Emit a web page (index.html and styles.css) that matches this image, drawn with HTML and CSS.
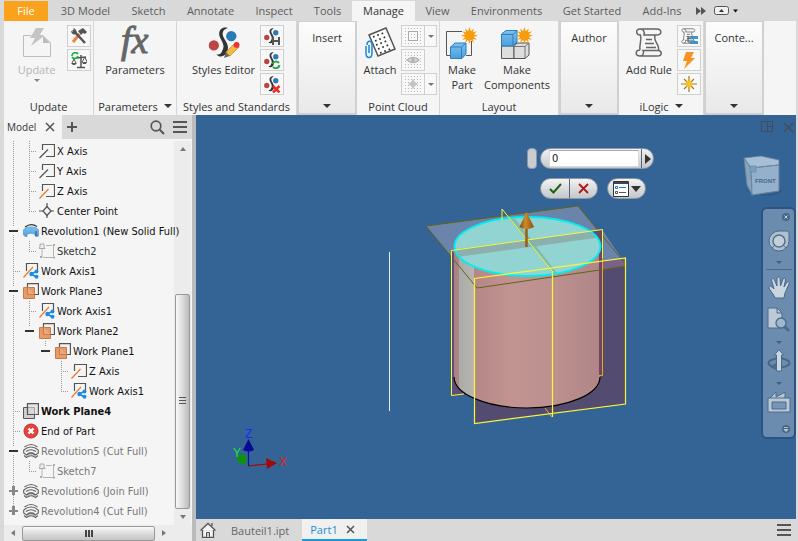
FILE: index.html
```html
<!DOCTYPE html>
<html lang="en">
<head>
  <meta charset="UTF-8">
  <meta name="viewport" content="width=device-width, initial-scale=1.0">
  <title>Part1</title>
  <link rel="stylesheet" href="styles.css">
</head>
<body>

<!-- shared icons -->
<svg class="defs" aria-hidden="true">
  <defs>
    <linearGradient id="blueFace" x1="0" y1="0" x2="0" y2="1">
      <stop offset="0" stop-color="#7cc2f2"/><stop offset="1" stop-color="#4a9fdc"/>
    </linearGradient>
    <symbol id="i-axis" viewBox="0 0 16 16">
      <path d="M3.5 7V1.500H15.500V13.500H7" fill="none" stroke="#555" stroke-width="1.200"/>
      <path d="M.5 15L9 6.500" stroke="#555" stroke-width="1.200"/>
    </symbol>
    <symbol id="i-zaxis" viewBox="0 0 16 16">
      <path d="M3.5 8V1.500H15.500V13.500H7" fill="none" stroke="#555" stroke-width="1.200"/>
      <path d="M.5 15.500L9.500 6" stroke="#ee7b30" stroke-width="1.300"/>
    </symbol>
    <symbol id="i-waxis" viewBox="0 0 16 16">
      <path d="M3.500 8V.500H14.500V7" fill="none" stroke="#555" stroke-width="1.200"/>
      <path d="M.5 14.500L10 4" stroke="#ee7b30" stroke-width="1.300"/>
      <path d="M13.500 8.500L8 11L13.500 14" fill="none" stroke="#1b8ce6" stroke-width="1.600"/>
      <g fill="#1b8ce6"><circle cx="13.500" cy="8.500" r="2"/><circle cx="8.500" cy="11" r="2.200"/><circle cx="13.500" cy="13.800" r="2"/></g>
    </symbol>
    <symbol id="i-point" viewBox="0 0 16 16">
      <path d="M8 3.500L12 8L8 12.500L4 8Z" fill="none" stroke="#555" stroke-width="1.300"/>
      <path d="M8 0V4M8 12V15M0 8H4M12 8H15" stroke="#555" stroke-width="1.200"/>
    </symbol>
    <symbol id="i-rev" viewBox="0 0 16 16">
      <path d="M2 4Q8-.5 14 3.500" fill="none" stroke="#333" stroke-width="1.200"/>
      <path d="M.5 7Q2 4 8 4Q14 4 15.500 7V13Q14 14 12 13V11Q8 9.500 4 11V13.500Q2 14 .5 12Z" fill="url(#blueFace)" stroke="#3c88c0" stroke-width=".6"/>
      <path d="M13 8V13" stroke="#31546e"/>
    </symbol>
    <symbol id="i-revcut" viewBox="0 0 16 16">
      <path d="M4 10Q8 8 12 10V14Q8 12 4 14Z" fill="#c8c8c8"/>
      <path d="M1.500 4Q8-1 14.500 4M.7 7Q8 1 15.300 7M.7 7V10L3.500 12Q8 8 12.500 12L15.300 10V7M3 8.500Q8 5 13 8.500M3.500 14.500Q8 11 12.500 14.500L15 12.500M1 12.500L3.500 14.500" fill="none" stroke="#666" stroke-width="1.200"/>
    </symbol>
    <symbol id="i-sketch" viewBox="0 0 16 16">
      <path d="M3 6V14M4 14.500H14M14.500 3V13M7 2.500H13" fill="none" stroke="#b4b4b4"/>
      <path d="M1 1H5V4L6 5.500H0L1 4Z" fill="#eee" stroke="#aaa"/>
      <path d="M1 13H3V15H1ZM14 1H16V3H14ZM14 13.500H16V15.500H14Z" fill="#aaa"/>
    </symbol>
    <symbol id="i-plane" viewBox="0 0 16 16">
      <path d="M4.500 4V.700H15.400V11.500H12" fill="none" stroke="#555" stroke-width="1.200"/>
      <path d="M.5 4.500H11.500V15.500H.5Z" fill="#e79b66" stroke="#c87a48"/>
      <path d="M4.500 4.500V11.500H11.500" fill="#e8ac84" stroke="#c87a48"/>
    </symbol>
    <symbol id="i-planegray" viewBox="0 0 16 16">
      <path d="M.5 4.500H11.500V15.500H.5Z" fill="#cfcfcf" stroke="#555"/>
      <path d="M4.500 .700H15.400V11.500H4.500Z" fill="#dcdcdc" fill-opacity=".6" stroke="#555" stroke-width="1.200"/>
    </symbol>
    <symbol id="i-end" viewBox="0 0 16 16">
      <circle cx="8" cy="8" r="7" fill="#e8423a" stroke="#b9332d"/>
      <path d="M5.500 5.500L10.500 10.500M10.500 5.500L5.500 10.500" stroke="#fff" stroke-width="2.400"/>
    </symbol>
    <symbol id="i-styles" viewBox="0 0 32 32">
      <path d="M20 1C13-1 9 5 12 11C15 17 17 19 14 25C13 28 10 29 8 28C13 34 21 28 20 20C19 14 13 10 15 5C16 2 18 2 20 1Z" fill="#333"/>
      <circle cx="5.500" cy="19" r="5.300" fill="#bc4646"/><circle cx="23.500" cy="9.500" r="5.300" fill="#2a7ab8"/>
    </symbol>
    <symbol id="i-burst" viewBox="0 0 16 16">
      <path d="M8 0L9.300 4L12 1.500L11.300 5L15 4L12 7L16 8L12 9.300L15 12L11.300 11.300L12 15L9.300 12L8 16L6.700 12L4 15L4.700 11.300L1 12L4 9.300L0 8L4 7L1 4L4.700 5L4 1.500L6.700 4Z" fill="#f59d0c"/>
    </symbol>
    <symbol id="i-scroll" viewBox="0 0 28 30">
      <path d="M5 1.500H22C27 1.500 27 7.500 22.500 7.500H9C10 4 8 1.500 5 1.500C0 1.500 1 7.500 5 7.500H6M5.500 7.500C7 13 4 17 5 22.500M20 8C18 14 25 17 23.500 23M5 22.500C0 22.500 0 28.500 5 28.500H22C28 28.500 27 23 23 23H8C9.500 25 8 28.500 5 28.500M11 12H17M10 16H19M11 20H21" fill="none" stroke="#666" stroke-width="1.500"/>
    </symbol>
    <symbol id="i-dots" viewBox="0 0 16 16">
      <path d="M0 .5H16M0 3.500H16M0 6.500H16M0 9.500H16M0 12.500H16M0 15.500H16" stroke="#b9b9b9" stroke-dasharray="1 2"/>
    </symbol>
  </defs>
</svg>

<div class="app">

  <nav class="tabs">
    <button class="tab file">File</button>
    <button class="tab">3D Model</button>
    <button class="tab">Sketch</button>
    <button class="tab">Annotate</button>
    <button class="tab">Inspect</button>
    <button class="tab">Tools</button>
    <button class="tab active">Manage</button>
    <button class="tab">View</button>
    <button class="tab">Environments</button>
    <button class="tab">Get Started</button>
    <button class="tab">Add-Ins</button>
    <span class="tab-tools">
      <button class="bare" aria-label="More tabs"><svg width="10" height="8" viewBox="0 0 10 8"><path d="M0 0L5 4L0 8ZM5 0L10 4L5 8Z" fill="#555"/></svg></button>
      <button class="bare" aria-label="Minimize ribbon"><svg width="24" height="10" viewBox="0 0 24 10"><rect x=".5" y=".5" width="14" height="8" rx="2" fill="#eef1f4" stroke="#555"/><path d="M5 6L7.500 3L10 6Z" fill="#333"/><path d="M19 3.500H24L21.500 6.500Z" fill="#111"/></svg></button>
    </span>
  </nav>

  <div class="ribbon">
    <section class="panel">
      <div class="panel-body">
        <button class="big disabled">
          <svg width="32" height="32" viewBox="0 0 32 32"><path d="M3 8.500H10M14 8.500H22L29.500 16V29.500H2.500V8.500H5" fill="none" stroke="#bdbdbd"/><path d="M22 9V16H29Z" fill="#bbb"/><path d="M15 1H23L18 9H23L10 19L14 11H9Z" fill="#c4c4c4"/></svg>
          <span>Update</span><i class="down"></i>
        </button>
        <div class="smalls">
          <button class="small" aria-label="Rebuild"><svg width="16" height="16" viewBox="0 0 16 16"><path d="M8.500 6L2 14" stroke="#ef8240" stroke-width="3"/><path d="M2 2L14 15" stroke="#555" stroke-width="2.500"/><path d="M0 3C0 6 4 8 6 5C6 3 4 0 2 0L4 3L3 4Z" fill="#555"/><path d="M7 3L12 0L16 4L14 6L12 5L10 7Z" fill="#555"/></svg></button>
          <button class="small" aria-label="Update mass"><svg width="16" height="17" viewBox="0 0 16 17"><path d="M10 3V15M6 15.500H14M5 6L15 5" stroke="#555" stroke-width="1.500"/><path d="M1 11L3 7L5 11M11 10L14 5L16 10" fill="none" stroke="#555"/><path d="M0 11H6L4 13H2ZM11 10H16L15 12H12Z" fill="#555"/><path d="M1 4A3.300 3.300 0 0 1 7 2M7 4A3.300 3.300 0 0 1 1 5" fill="none" stroke="#18b048" stroke-width="1.700"/></svg></button>
        </div>
      </div>
      <h2>Update</h2>
    </section>

    <section class="panel">
      <div class="panel-body">
        <button class="big">
          <svg class="fx-icon" width="36" height="32" viewBox="0 0 36 32"><text class="fx" x="4" y="26">fx</text></svg>
          <span>Parameters</span>
        </button>
      </div>
      <h2>Parameters <i class="down"></i></h2>
    </section>

    <section class="panel">
      <div class="panel-body styles">
        <button class="big">
          <svg width="32" height="32" viewBox="0 0 32 33"><use href="#i-styles" width="32" height="32"/><path d="M18 26L27 17L31 21L22 30Z" fill="#f3ba44" stroke="#b98824" stroke-width=".8"/><path d="M18 26L22 30L16 32Z" fill="#666"/><circle cx="29" cy="18.500" r="3" fill="#e33"/></svg>
          <span>Styles Editor</span>
        </button>
        <div class="smalls">
          <button class="small" aria-label="Save styles"><svg width="17" height="17" viewBox="0 0 17 17"><use href="#i-styles" width="16" height="16"/><path d="M8 9H16V17H8Z" fill="#555"/><path d="M10 9H14V12H10ZM10 14H14V17H10Z" fill="#eee"/></svg></button>
          <button class="small" aria-label="Update styles"><svg width="17" height="17" viewBox="0 0 17 17"><use href="#i-styles" width="16" height="16"/><path d="M8.500 12A3.800 3.800 0 0 1 15 11M15.500 13A3.800 3.800 0 0 1 9 15" fill="none" stroke="#28a84a" stroke-width="2"/></svg></button>
          <button class="small" aria-label="Purge styles"><svg width="17" height="17" viewBox="0 0 17 17"><use href="#i-styles" width="16" height="16"/><path d="M9 10L15.500 16.500M15.500 10L9 16.500" stroke="#ec2c2c" stroke-width="2.500"/></svg></button>
        </div>
      </div>
      <h2>Styles and Standards</h2>
    </section>

    <button class="panel folded"><span>Insert</span><i class="down"></i></button>

    <section class="panel">
      <div class="panel-body">
        <button class="big">
          <svg width="32" height="32" viewBox="0 0 32 32"><path d="M5 8L22 1L31 22L14 29Z" fill="#fff" stroke="#555" stroke-width="1.500"/><g fill="none" stroke="#333" stroke-width="1.700" stroke-dasharray="1.700 2.900"><path d="M9 10L22 5"/><path d="M11 14L24 9"/><path d="M12 18L25 13"/><path d="M14 22L27 17"/><path d="M16 26L29 21"/></g><path d="M2 19V26C2 32 8 32 8 26V18C8 13 3 13 3 18M5 18V26" fill="none" stroke="#1787d8" stroke-width="1.500"/></svg>
          <span>Attach</span>
        </button>
        <div class="smalls">
          <span class="split"><button class="small" aria-label="Box crop"><svg width="16" height="16" viewBox="0 0 16 16"><use href="#i-dots" width="16" height="16"/><path d="M3.500 3.500H12.500V12.500H3.500Z" fill="none" stroke="#aaa"/></svg></button><button class="drop" aria-label="Crop options"><i class="down"></i></button></span>
          <button class="small" aria-label="Cloud visibility"><svg width="16" height="16" viewBox="0 0 16 16"><use href="#i-dots" width="16" height="16"/><path d="M2 8Q8 3 14 8Q8 13 2 8Z" fill="#ddd" stroke="#b4b4b4" stroke-width="1.500"/><circle cx="8" cy="8" r="2" fill="#b4b4b4"/></svg></button>
          <span class="split"><button class="small" aria-label="Cloud point"><svg width="16" height="16" viewBox="0 0 16 16"><use href="#i-dots" width="16" height="16"/><path d="M8 3L10 6L13 8L10 10L8 13L6 10L3 8L6 6Z" fill="#c4c4c4"/></svg></button><button class="drop" aria-label="Point options"><i class="down"></i></button></span>
        </div>
      </div>
      <h2>Point Cloud</h2>
    </section>

    <section class="panel">
      <div class="panel-body layout">
        <button class="big part">
          <svg width="32" height="32" viewBox="0 0 32 32"><path d="M4 28.500H.500V4.500H16M25.500 14V28.500H20" fill="none" stroke="#555"/><path d="M4.500 20L9 16H20V27L16 31.500H4.500Z" fill="url(#blueFace)" stroke="#2f7eb8"/><path d="M4.500 20H15.500V31M15.500 20L20 16" fill="none" stroke="#2f7eb8"/><use href="#i-burst" x="15" y="0" width="17" height="17"/></svg>
          <span>Make<br>Part</span>
        </button>
        <button class="big">
          <svg width="32" height="32" viewBox="0 0 32 32"><path d="M.5 19H13V31.500H.5Z" fill="#ddd" stroke="#555"/><path d="M13 19.500L16 16H28V28L24 31.500H13Z" fill="#ddd" stroke="#555"/><path d="M13 19.500H24V31M24 19.500L28 16" fill="none" stroke="#777"/><path d="M.5 7L5 3.500H16V15L12 19H.5Z" fill="url(#blueFace)" stroke="#2f7eb8"/><path d="M.5 7.500H12V19M12 7.500L16 3.500" fill="none" stroke="#2f7eb8"/><use href="#i-burst" x="15" y="0" width="17" height="17"/></svg>
          <span>Make<br>Components</span>
        </button>
      </div>
      <h2>Layout</h2>
    </section>

    <button class="panel folded"><span>Author</span><i class="down"></i></button>

    <section class="panel">
      <div class="panel-body">
        <button class="big">
          <svg width="28" height="32" viewBox="0 0 28 32"><use href="#i-scroll" width="28" height="31"/></svg>
          <span>Add Rule</span>
        </button>
        <div class="smalls">
          <button class="small" aria-label="iLogic browser"><svg width="17" height="17" viewBox="0 0 17 17"><use href="#i-scroll" width="15" height="16"/><path d="M7 8V14H10M7 10H10" fill="none" stroke="#555"/><path d="M9 8H17V11H9ZM9 13H17V16H9Z" fill="#3d94d0"/></svg></button>
          <button class="small" aria-label="Event triggers"><svg width="16" height="17" viewBox="0 0 16 17"><path d="M5 0H13L10 6H14L3 17L6 9H2Z" fill="#f7931e"/></svg></button>
          <button class="small" aria-label="iTrigger"><svg width="16" height="16" viewBox="0 0 16 16"><path d="M8 0V16M0 8H16M3 3L13 13M13 3L3 13" stroke="#a8791c" stroke-width="1.200"/><circle cx="8" cy="8" r="3.300" fill="#fbc21c"/></svg></button>
        </div>
      </div>
      <h2>iLogic <i class="down"></i></h2>
    </section>

    <button class="panel folded"><span>Conte...</span><i class="down"></i></button>
  </div>

  <div class="work">
    <aside class="browser">
      <header class="browser-head">
        <span class="browser-tab">Model
          <button class="bare" aria-label="Close"><svg width="10" height="10" viewBox="0 0 10 10"><path d="M1 1L9 9M9 1L1 9" stroke="#555" stroke-width="1.500"/></svg></button>
        </span>
        <button class="bare" aria-label="Add"><svg width="12" height="12" viewBox="0 0 12 12"><path d="M6 1V11M1 6H11" stroke="#555" stroke-width="2"/></svg></button>
        <button class="bare search" aria-label="Search"><svg width="15" height="15" viewBox="0 0 15 15"><circle cx="6" cy="6" r="4.800" fill="none" stroke="#555" stroke-width="1.700"/><path d="M9.500 9.500L14 14" stroke="#555" stroke-width="2"/></svg></button>
        <button class="bare" aria-label="Menu"><svg width="14" height="12" viewBox="0 0 14 12"><path d="M0 1H14M0 6H14M0 11H14" stroke="#555" stroke-width="2"/></svg></button>
      </header>

      <div class="browser-body">
        <ul class="tree">
          <li><i class="v"></i><i class="v t"></i><svg><use href="#i-axis"/></svg>X Axis</li>
          <li><i class="v"></i><i class="v t"></i><svg><use href="#i-axis"/></svg>Y Axis</li>
          <li><i class="v"></i><i class="v t"></i><svg><use href="#i-zaxis"/></svg>Z Axis</li>
          <li><i class="v"></i><i class="l t"></i><svg><use href="#i-point"/></svg>Center Point</li>
          <li><i class="v minus"></i><svg><use href="#i-rev"/></svg>Revolution1 (New Solid Full)</li>
          <li><i class="v"></i><i class="l t"></i><svg><use href="#i-sketch"/></svg><span class="dark">Sketch2</span></li>
          <li><i class="v t"></i><svg><use href="#i-waxis"/></svg>Work Axis1</li>
          <li><i class="v minus"></i><svg><use href="#i-plane"/></svg>Work Plane3</li>
          <li><i class="v"></i><i class="v t"></i><svg><use href="#i-waxis"/></svg>Work Axis1</li>
          <li><i class="v"></i><i class="l minus"></i><svg><use href="#i-plane"/></svg>Work Plane2</li>
          <li><i class="v"></i><i></i><i class="l minus"></i><svg><use href="#i-plane"/></svg>Work Plane1</li>
          <li><i class="v"></i><i></i><i></i><i class="v t"></i><svg><use href="#i-zaxis"/></svg>Z Axis</li>
          <li><i class="v"></i><i></i><i></i><i class="l t"></i><svg><use href="#i-waxis"/></svg>Work Axis1</li>
          <li class="current"><i class="v t"></i><svg><use href="#i-planegray"/></svg>Work Plane4</li>
          <li><i class="v t"></i><svg><use href="#i-end"/></svg>End of Part</li>
          <li class="dim"><i class="v minus"></i><svg><use href="#i-revcut"/></svg>Revolution5 (Cut Full)</li>
          <li class="dim"><i class="v"></i><i class="l t"></i><svg><use href="#i-sketch"/></svg>Sketch7</li>
          <li class="dim"><i class="v minus plus"></i><svg><use href="#i-revcut"/></svg>Revolution6 (Join Full)</li>
          <li class="dim"><i class="l minus plus"></i><svg><use href="#i-revcut"/></svg>Revolution4 (Cut Full)</li>
        </ul>
        <div class="vscroll">
          <i class="arrow up"></i><div class="track"><div class="thumb"></div></div><i class="arrow"></i>
        </div>
      </div>
      <div class="hscroll">
        <i class="arrow left"></i><div class="thumb"></div><i class="arrow right"></i>
      </div>
    </aside>

    <main class="stage">
      <div class="viewport">
        <svg class="scene" viewBox="196 115 600 404" preserveAspectRatio="xMidYMid meet">
          <defs>
            <linearGradient id="body" x1="454" x2="600" y1="0" y2="0" gradientUnits="userSpaceOnUse">
              <stop offset="0" stop-color="#a97f84"/><stop offset=".035" stop-color="#b08788"/>
              <stop offset=".035" stop-color="#a9abaa"/><stop offset=".14" stop-color="#b8b5b0"/>
              <stop offset=".14" stop-color="#b58887"/><stop offset=".4" stop-color="#c19492"/>
              <stop offset=".7" stop-color="#bc908e"/><stop offset="1" stop-color="#af8587"/>
            </linearGradient>
            <linearGradient id="cone"><stop offset="0" stop-color="#7c4608"/><stop offset=".4" stop-color="#d08a26"/><stop offset="1" stop-color="#8a500c"/></linearGradient>
            <clipPath id="topClip"><ellipse cx="527.500" cy="246.500" rx="73" ry="29.500"/></clipPath>
          </defs>
          <path d="M389.500 252V411" stroke="#e6edf4"/>
          <path d="M426 226L578 206L627 266L477 288Z" fill="#6b84ac"/>
          <path d="M452 250L602 230V376L452 396Z" fill="#5f4e73"/>
          <path d="M452 250L474 288V278L454 250Z" fill="#6b84ac"/>
          <path d="M474.500 278.500L625.500 258V404L474.500 423.500Z" fill="#544c70"/>
          <path d="M602 231V262L625 258L627 266L602 270Z" fill="#79628a"/>
          <path d="M603 231V261L622 259Z" fill="#6b84ac"/>
          <path d="M454 247V377A73 31 0 0 0 600 377V247Z" fill="url(#body)"/>
          <path d="M599 232L603 230V376H599Z" fill="#72445f"/>
          <path d="M454 377A73 31 0 0 0 600 377" fill="none" stroke="#000" stroke-width="1.200"/>
          <ellipse cx="527.500" cy="246.500" rx="73" ry="29.500" fill="#92d4d2"/>
          <g clip-path="url(#topClip)">
            <path d="M450 250L602 230V237L450 258Z" fill="#8cb0ae"/>
            <path d="M501 209L514 217L560 277L552 272Z" fill="#7fb7a7" fill-opacity=".8"/>
          </g>
          <ellipse cx="527.500" cy="246.500" rx="73" ry="29.500" fill="none" stroke="#00eef0" stroke-width="2"/>
          <path d="M426 226L578 206L627 266L477 288Z" fill="none" stroke="#626414"/>
          <path d="M602.500 258V375.500H599M545 408L552 417" fill="none" stroke="#e9a820"/>
          <path d="M602.500 258V229.500L451.500 250.500V395.500L464 394M502 220V209L552 271" fill="none" stroke="#f7f73a"/>
          <path d="M474.500 278.500L625.500 258V404L474.500 423.500ZM552.500 271V417" fill="none" stroke="#f7f73a" stroke-width="1.200"/>
          <path d="M526.500 227V247" stroke="#9a5e14" stroke-width="2.500"/>
          <path d="M526.500 212L534 227Q526.500 231 519.500 227Z" fill="url(#cone)"/>

          <path d="M248.500 466L267 464" stroke="#b40000" stroke-width="1.200"/>
          <path d="M248.500 466V448" stroke="#0d0db0" stroke-width="1.200"/>
          <path d="M248 466L243 460" stroke="#13941c"/>
          <path d="M266 458L277 463L267 469Z" fill="#a00a0a"/>
          <path d="M248.500 439L254 450Q248.500 453 243 450Z" fill="#0a0a96"/>
          <circle cx="242" cy="459" r="5" fill="#109010"/>
          <text class="axis" x="279" y="466" fill="#e02020">X</text>
          <text class="axis" x="233" y="457" fill="#20e040">Y</text>
          <text class="axis" x="245" y="438" fill="#2424ff">Z</text>
        </svg>

        <div class="window-tools">
          <button class="bare" aria-label="Tile windows"><svg width="13" height="12" viewBox="0 0 13 12"><path d="M.5 .5H11.500V10.500H.5ZM6.500 .5V10.500M6.500 5.500H11.500" fill="none" stroke="#444c56"/></svg></button>
          <button class="bare" aria-label="Close window"><svg width="11" height="11" viewBox="0 0 11 11"><path d="M1 1L10 10M10 1L1 10" stroke="#444c56" stroke-width="1.400"/></svg></button>
        </div>

        <form class="mini">
          <span class="grip"></span>
          <div class="mini-rows">
            <div class="pill value">
              <input type="text" value="0" aria-label="Offset">
              <button type="button" aria-label="Value options"><svg width="6" height="10" viewBox="0 0 6 10"><path d="M0 0L6 5L0 10Z" fill="#333"/></svg></button>
            </div>
            <div class="mini-row">
              <div class="pill decide">
                <button type="button" aria-label="OK"><svg width="13" height="11" viewBox="0 0 13 11"><path d="M1 6L4.500 9.500L12 1" fill="none" stroke="#156318" stroke-width="2"/></svg></button>
                <button type="button" aria-label="Cancel"><svg width="11" height="11" viewBox="0 0 11 11"><path d="M1 1L10 10M10 1L1 10" stroke="#b01818" stroke-width="1.800"/></svg></button>
              </div>
              <button type="button" class="pill options" aria-label="Options"><svg width="28" height="16" viewBox="0 0 28 16"><path d="M.5 .5H15.500V15.500H.5Z" fill="#fff" stroke="#333"/><path d="M1 1H15V3H1Z" fill="#39465a"/><path d="M2.500 5.500H4.500V7.500H2.500ZM6 6.500H13" fill="none" stroke="#1a78d8"/><path d="M2.500 10.500H4.500V12.500H2.500ZM6 11.500H13" fill="none" stroke="#555"/><path d="M18 5H28L23 11Z" fill="#333"/></svg></button>
            </div>
          </div>
        </form>

        <svg class="cube" width="44" height="48" viewBox="740 152 44 48">
          <ellipse cx="765" cy="191" rx="17" ry="5" fill="#2c5685" fill-opacity=".6"/>
          <g stroke="#6d8299" stroke-width=".8">
            <path d="M744 158L761 156L779 160V165L751 168Z" fill="#a6bfd6"/>
            <path d="M744 158L751 168L752 195L747 185Z" fill="#86a3c0"/>
            <path d="M751 168L779 165V191L752 195Z" fill="#93b0cd"/>
            <path d="M751 168L779 165V191L752 195Z" fill="none" stroke-dasharray="5 3"/>
          </g>
          <rect x="750" y="166" width="6" height="6" fill="#7d9fc0" stroke="#5c88b0" stroke-width=".7"/>
          <text class="face" x="755" y="183">FRONT</text>
        </svg>

        <div class="navbar">
          <button class="dot" aria-label="Close navigation bar"><svg width="8" height="8" viewBox="0 0 8 8"><circle cx="4" cy="4" r="4" fill="#46668a"/><path d="M2.500 2.500L5.500 5.500M5.500 2.500L2.500 5.500" stroke="#c3d0dc"/></svg></button>
          <button class="bare" aria-label="Steering wheel"><svg width="22" height="22" viewBox="0 0 22 22"><path d="M11 1H19Q21 1 21 3V11A10 10 0 1 1 11 1Z" fill="#afc0d0" stroke="#4b6b8d"/><circle cx="11" cy="11" r="6" fill="#c3d0dc" stroke="#54718e" stroke-width="1.500"/><path d="M4 18L7 15M18 18L15 15" stroke="#54718e"/></svg></button>
          <i class="down"></i>
          <hr>
          <button class="bare" aria-label="Pan"><svg width="22" height="24" viewBox="0 0 22 24"><path d="M7 22C6 18 1 14 .8 11C2 9 4 11 6 13L3.500 4C4 2 6 2 6.500 4L9 10L9 2C10 .5 12 .5 12 2L12.500 10L15 3C16 1.500 18 2 17.500 4L16 11L19 6C20 5 22 6 21 8L17 17L16 22Z" fill="#c9d5df" stroke="#48688a"/></svg></button>
          <button class="bare zoom" aria-label="Zoom"><svg width="23" height="25" viewBox="0 0 23 25"><path d="M1 1H10L15 6V21H1Z" fill="#bccad7" stroke="#4b6b8d"/><path d="M10 1V6H15" fill="none" stroke="#4b6b8d"/><path d="M17 19L22 24" stroke="#4b6b8d" stroke-width="3"/><circle cx="14" cy="16" r="5" fill="#9fb6cb" stroke="#4b6b8d" stroke-width="1.300"/></svg></button>
          <i class="down"></i>
          <button class="bare" aria-label="Orbit"><svg width="24" height="24" viewBox="0 0 24 24"><ellipse cx="12" cy="14" rx="10.500" ry="4.500" fill="none" stroke="#486788" stroke-width="2"/><path d="M9.500 22V6H7.500L12 .700L16.500 6H14.500V22Z" fill="#c9d5df" stroke="#4b6b8d"/><path d="M3 18L9 14V21Z" fill="#4b6b8d"/></svg></button>
          <i class="down"></i>
          <button class="bare" aria-label="Look at"><svg width="24" height="23" viewBox="0 0 24 23"><path d="M3 8L9 2V7L18 2V8" fill="#b5c5d3" stroke="#4b6b8d"/><path d="M1 8H23V22H1Z" fill="#b9c8d6" stroke="#4b6b8d"/><path d="M5 12H19V19H5Z" fill="#7896b4" stroke="#4b6b8d"/></svg></button>
          <button class="dot last" aria-label="Customize"><svg width="8" height="8" viewBox="0 0 8 8"><circle cx="4" cy="4" r="4" fill="#46668a"/><path d="M2 2.500H6M2 4.500H6L4 6.500Z" fill="#c3d0dc" stroke="#c3d0dc" stroke-width=".8"/></svg></button>
        </div>
      </div>

      <footer class="docs">
        <button class="bare home" aria-label="Home"><svg width="16" height="16" viewBox="0 0 16 16"><path d="M2.500 8V15.500H13.500V8M.5 8.500L8 1.500L15.500 8.500M12 1V4" fill="#f4f4f4" stroke="#555" stroke-width="1.300"/><path d="M6.500 15V10.500H9.500V15" fill="#ccc" stroke="#555"/></svg></button>
        <a href="#" class="doc">Bauteil1.ipt</a>
        <span class="doc-open"><a href="#" class="doc">Part1</a>
          <button class="bare" aria-label="Close Part1"><svg width="9" height="9" viewBox="0 0 9 9"><path d="M1 1L8 8M8 1L1 8" stroke="#555" stroke-width="1.500"/></svg></button>
        </span>
        <button class="bare docs-menu" aria-label="Document list"><svg width="14" height="12" viewBox="0 0 14 12"><path d="M0 1H14M0 6H14M0 11H14" stroke="#555" stroke-width="2"/></svg></button>
      </footer>
    </main>
  </div>
</div>
</body>
</html>
```
FILE: styles.css
```css
* {
  box-sizing: border-box;
}
body {
  margin: 0;
  background: #d9d9d9;
  font-family: "Open Sans", "Noto Sans", sans-serif;
  font-size: 11px;
  color: #333;
}
button {
  margin: 0;
  padding: 0;
  border: 0;
  background: none;
  font: inherit;
  color: inherit;
}
svg {
  display: block;
  flex: none;
}
.defs {
  position: absolute;
  width: 0;
  height: 0;
}
.app {
  display: flex;
  flex-direction: column;
  height: 100vh;
  padding: 0 2px 0 4px;
}
.bare {
  display: flex;
  align-items: center;
}
.down {
  display: inline-block;
  border: 4px solid transparent;
  border-top-color: #333;
  border-bottom: 0;
}

/* ribbon tabs */
.tabs {
  display: grid;
  grid-template-columns: 46px 71px 55px 69px 58px 49px 63px 45px 93px 78px 62px 1fr;
  height: 21px;
  padding-top: 1px;
}
.tab {
  line-height: 20px;
  color: #5c5c5c;
  white-space: nowrap;
}
.tab.file {
  background: #faa21b;
  color: #fff;
  margin-right: 2px;
}
.tab.active {
  background: #f5f5f5;
  color: #333;
}
.tab-tools {
  display: flex;
  align-items: center;
  gap: 8px;
  padding-left: 3px;
}

/* ribbon panels */
.ribbon {
  display: grid;
  grid-template-columns: 90px 83px 120px 60px 83px 119px 60px 85px 60px 1fr;
  height: 94px;
  background: #f5f5f5;
}
.panel {
  display: flex;
  flex-direction: column;
  min-width: 0;
  border-right: 1px solid #d6d6d6;
}
.panel-body {
  display: flex;
  flex: 1;
  justify-content: space-between;
  padding: 4px 2px 0;
}
.panel h2 {
  display: flex;
  justify-content: center;
  align-items: center;
  gap: 6px;
  margin: 0;
  height: 18px;
  font-size: 11px;
  font-weight: normal;
  white-space: nowrap;
}
.big {
  display: flex;
  flex: 1;
  flex-direction: column;
  align-items: center;
  padding-top: 2px;
  line-height: 15px;
  white-space: nowrap;
}
.big span {
  margin-top: 3px;
}
.big .down {
  margin-top: 2px;
  border-width: 3px;
  border-bottom: 0;
}
.big.disabled {
  color: #b4b4b4;
}
.disabled .down {
  border-top-color: #888;
}
.fx-icon {
  overflow: visible;
}
.fx {
  font: italic 38px "Liberation Serif", serif;
  fill: #666;
  stroke: #666;
}
.smalls {
  display: flex;
  flex-direction: column;
  gap: 2px;
}
.small, .drop {
  display: flex;
  align-items: center;
  justify-content: center;
  width: 24px;
  height: 22px;
  border: 1px solid #cfcfcf;
  background: #f8f8f8;
}
.drop {
  width: 13px;
  margin-left: -1px;
}
.drop .down {
  border-width: 3px;
  border-bottom: 0;
  border-top-color: #777;
}
.split {
  display: flex;
}
.styles {
  padding: 4px 12px 0 10px;
}
.layout {
  padding: 4px 4px 0;
}
.part {
  flex: none;
  width: 36px;
}
.folded {
  align-items: center;
  justify-content: space-between;
  padding: 8px 0 5px;
  border: 2px solid #d0d0d0;
  border-top-width: 1px;
  background: linear-gradient(#fcfcfc, #e9e9e9);
}

/* model browser */
.work {
  display: flex;
  flex: 1;
  min-height: 0;
}
.browser {
  display: flex;
  flex-direction: column;
  width: 192px;
  border-right: 4px solid #bbb;
  background: #f5f5f5;
}
.browser-head {
  display: flex;
  align-items: center;
  gap: 8px;
  height: 24px;
  padding-right: 5px;
  background: #d9d9d9;
}
.browser-tab {
  display: flex;
  align-items: center;
  justify-content: space-between;
  width: 58px;
  height: 24px;
  padding: 0 7px 0 3px;
  margin-right: -4px;
  background: #f5f5f5;
  font-size: 10px;
}
.search {
  margin-left: auto;
}
.browser-body {
  display: flex;
  flex: 1;
  min-height: 0;
  padding-top: 2px;
}
.tree {
  z-index: 1;
  flex: 1;
  min-width: 0;
  margin: 0;
  padding: 0 0 0 1px;
  list-style: none;
  font-family: "DejaVu Sans Condensed", "Noto Sans", sans-serif;
  font-size: 11px;
  color: #111;
}
.tree li {
  display: flex;
  align-items: center;
  height: 20px;
  white-space: nowrap;
}
.tree svg {
  width: 16px;
  height: 16px;
  margin: 0 2px;
}
.tree i {
  position: relative;
  flex: none;
  width: 16px;
  height: 20px;
}
.tree .v::before, .tree .l::before {
  content: "";
  position: absolute;
  left: 8px;
  top: 0;
  width: 1px;
  height: 20px;
  background: repeating-linear-gradient(#999 0 1px, transparent 1px 2px);
}
.tree .l::before {
  height: 10px;
}
.tree .t {
  padding-left: 8px;
  background: linear-gradient(90deg, #999 50%, transparent 50%) 0 10px / 2px 1px repeat-x content-box;
}
.tree .minus::after {
  content: "";
  position: absolute;
  left: 4px;
  top: 5px;
  width: 9px;
  height: 9px;
  background: linear-gradient(#333, #333) center / 9px 2px no-repeat #f5f5f5;
}
.tree .plus::after {
  background: linear-gradient(#888, #888) center / 9px 2px no-repeat, linear-gradient(#888, #888) center / 3px 9px no-repeat #f5f5f5;
}
.tree .dim {
  color: #777;
}
.tree .dark {
  color: #333;
}
.tree .current {
  font-weight: bold;
}
.vscroll {
  display: flex;
  flex-direction: column;
  align-items: center;
  width: 17px;
  padding: 6px 0;
  margin-right: 1px;
  background: #ececec;
}
.arrow {
  width: 0;
  height: 0;
  border: 3px solid transparent;
  border-top: 4px solid #777;
  border-bottom: 0;
}
.arrow.up {
  border-top: 0;
  border-bottom: 4px solid #777;
}
.arrow.left {
  border: 3px solid transparent;
  border-right: 4px solid #777;
  border-left: 0;
}
.arrow.right {
  border: 3px solid transparent;
  border-left: 4px solid #777;
  border-right: 0;
}
.track {
  display: flex;
  flex-direction: column;
  justify-content: flex-end;
  flex: 1;
  width: 15px;
  padding-bottom: 6px;
}
.thumb {
  border: 1px solid #999;
  border-radius: 2px;
}
.vscroll .thumb {
  height: 60%;
  background:
    repeating-linear-gradient(#555 0 1px, transparent 1px 3px) center / 7px 9px no-repeat,
    linear-gradient(90deg, #f8f8f8, #dcdcdc 50%, #bbb);
}
.hscroll {
  display: flex;
  align-items: center;
  gap: 7px;
  height: 16px;
  padding: 0 26px 0 7px;
  background: #ececec;
}
.hscroll .thumb {
  flex: 1;
  height: 15px;
  background:
    repeating-linear-gradient(90deg, #444 0 2px, transparent 2px 3px) center / 8px 7px no-repeat,
    linear-gradient(#f8f8f8, #dcdcdc 50%, #c4c4c4);
}

/* graphics window */
.stage {
  display: flex;
  flex: 1;
  flex-direction: column;
  min-width: 0;
}
.viewport {
  position: relative;
  flex: 1;
  min-height: 0;
  background: #346395;
  overflow: hidden;
}
.scene {
  width: 100%;
  height: 100%;
}
.axis {
  font: 12px "Liberation Sans", sans-serif;
}
.window-tools {
  position: absolute;
  top: 6px;
  right: 2px;
  display: flex;
  gap: 9px;
}
.mini {
  position: absolute;
  top: 33px;
  left: 331px;
  display: flex;
  gap: 3px;
}
.grip {
  width: 10px;
  height: 21px;
  border: 1px solid #8d98a6;
  border-radius: 4px;
  background: #c9cdd2;
}
.mini-rows {
  display: flex;
  flex-direction: column;
  gap: 9px;
}
.mini-row {
  display: flex;
  gap: 9px;
}
.pill {
  display: flex;
  align-items: center;
  height: 21px;
  border: 1px solid #8d98a6;
  border-radius: 11px;
  background: linear-gradient(#f3f3f3, #c4c6ca);
}
.pill button {
  display: flex;
  align-items: center;
  justify-content: center;
  height: 19px;
}
.value {
  width: 114px;
  padding-left: 8px;
}
.value input {
  flex: 1;
  min-width: 0;
  height: 17px;
  margin-right: 2px;
  padding: 0 2px;
  border: 1px solid #d8d8dc;
  border-top-color: #a9a4ae;
  background: #fff;
  font: 11px "DejaVu Sans Condensed", sans-serif;
  color: #111;
}
.value button {
  width: 12px;
  border-left: 1px solid #5b6675;
}
.decide button {
  width: 28px;
}
.decide button + button {
  border-left: 1px solid #5b6675;
}
.options {
  justify-content: center;
  width: 39px;
}
.cube {
  position: absolute;
  top: 37px;
  right: 12px;
}
.face {
  font: bold 6px "Liberation Sans", sans-serif;
  fill: #4e6680;
}
.navbar {
  position: absolute;
  top: 92px;
  right: 0;
  display: flex;
  flex-direction: column;
  align-items: center;
  width: 35px;
  height: 232px;
  padding-top: 4px;
  border: 2px solid #2c5482;
  border-radius: 6px;
  background: #6b8caf;
}
.navbar .down {
  border-width: 3px;
  border-bottom: 0;
  border-top-color: #3f5f82;
  margin: 9px 0 5px;
}
.navbar hr {
  width: 26px;
  margin: 0 0 6px;
  border: 0;
  border-top: 1px solid #456a92;
}
.navbar .zoom {
  margin-top: 7px;
}
.dot {
  align-self: flex-end;
  margin: 0 4px 9px 0;
}
.dot.last {
  margin: auto 4px 4px 0;
}

/* document tabs */
.docs {
  display: flex;
  align-items: center;
  height: 22px;
  padding: 0 5px 0 4px;
}
.doc {
  color: #666;
  text-decoration: none;
}
.home {
  margin-right: 15px;
}
.doc-open {
  display: flex;
  align-items: center;
  gap: 8px;
  height: 22px;
  margin-left: 13px;
  padding: 0 12px 0 8px;
  border-bottom: 2px solid #1a9ad6;
  background: #f0f0f0;
}
.doc-open .doc {
  color: #1a8fd0;
}
.docs-menu {
  margin-left: auto;
}
```
